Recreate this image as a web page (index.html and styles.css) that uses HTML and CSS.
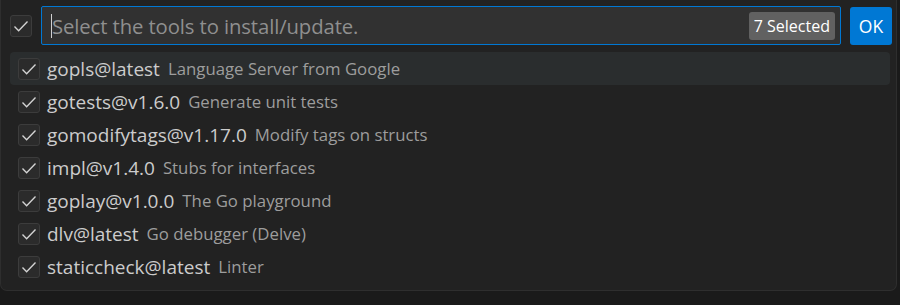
FILE: index.html
```html
<!DOCTYPE html>
<html>
<head>
<meta charset="utf-8">
<link rel="stylesheet" href="styles.css">
</head>
<body>
<div class="widget">
  <div class="header">
    <span class="cb cb-top"><svg viewBox="0 0 16 16"><path d="M2.8 8.4 L6.1 11.8 L13.2 4.4"/></svg></span>
    <div class="input">
      <span class="caret"></span>
      <span class="placeholder">Select the tools to install/update.</span>
      <span class="badge">7 Selected</span>
    </div>
    <button class="ok">OK</button>
  </div>
  <div class="list">
    <div class="row active"><span class="cb"><svg viewBox="0 0 16 16"><path d="M2.8 8.4 L6.1 11.8 L13.2 4.4"/></svg></span><span class="label">gopls@latest</span><span class="desc">Language Server from Google</span></div>
    <div class="row"><span class="cb"><svg viewBox="0 0 16 16"><path d="M2.8 8.4 L6.1 11.8 L13.2 4.4"/></svg></span><span class="label">gotests@v1.6.0</span><span class="desc">Generate unit tests</span></div>
    <div class="row"><span class="cb"><svg viewBox="0 0 16 16"><path d="M2.8 8.4 L6.1 11.8 L13.2 4.4"/></svg></span><span class="label">gomodifytags@v1.17.0</span><span class="desc">Modify tags on structs</span></div>
    <div class="row"><span class="cb"><svg viewBox="0 0 16 16"><path d="M2.8 8.4 L6.1 11.8 L13.2 4.4"/></svg></span><span class="label">impl@v1.4.0</span><span class="desc">Stubs for interfaces</span></div>
    <div class="row"><span class="cb"><svg viewBox="0 0 16 16"><path d="M2.8 8.4 L6.1 11.8 L13.2 4.4"/></svg></span><span class="label">goplay@v1.0.0</span><span class="desc">The Go playground</span></div>
    <div class="row"><span class="cb"><svg viewBox="0 0 16 16"><path d="M2.8 8.4 L6.1 11.8 L13.2 4.4"/></svg></span><span class="label">dlv@latest</span><span class="desc">Go debugger (Delve)</span></div>
    <div class="row"><span class="cb"><svg viewBox="0 0 16 16"><path d="M2.8 8.4 L6.1 11.8 L13.2 4.4"/></svg></span><span class="label">staticcheck@latest</span><span class="desc">Linter</span></div>
  </div>
</div>
</body>
</html>
```
FILE: styles.css
```css
html, body {
  margin: 0;
  padding: 0;
  background: #1a1a1a;
  height: 305px;
  overflow: hidden;
  font-family: "Open Sans", "Noto Sans", sans-serif;
}
.widget {
  width: 897px;
  background: #222222;
  border: 1px solid #2e2e2e;
  border-top: none;
  border-radius: 0 0 7px 7px;
  padding: 6px 0 6px 0;
  box-sizing: border-box;
  height: 291px;
}
.header {
  display: flex;
  align-items: center;
  padding-left: 9px;
  height: 39px;
}
.cb {
  width: 20px;
  height: 20px;
  border: 1px solid #3c3c3c;
  background: #2b2b2b;
  border-radius: 3px;
  display: flex;
  align-items: center;
  justify-content: center;
  flex: none;
}
.cb svg {
  width: 20px;
  height: 20px;
  fill: none;
  stroke: #d4d4d4;
  stroke-width: 1.1;
}
.cb-top {
  margin-right: 9px;
}
.input {
  width: 800px;
  height: 39px;
  box-sizing: border-box;
  border: 1px solid #0078d4;
  border-radius: 2px;
  background: #313131;
  display: flex;
  align-items: center;
  padding: 0 5px 0 9px;
  position: relative;
}
.caret {
  width: 1px;
  height: 24px;
  background: #d0d0d0;
}
.placeholder {
  color: #8f8f8f;
  font-size: 20.3px;
  flex: 1;
  letter-spacing: -0.1px;
}
.badge {
  background: #616161;
  color: #ffffff;
  font-size: 16px;
  border-radius: 3px;
  padding: 0 5px;
  height: 28px;
  line-height: 28px;
}
.ok {
  margin-left: 9px;
  width: 42px;
  height: 38px;
  border: none;
  border-radius: 3px;
  background: #0078d4;
  color: #ffffff;
  font-family: inherit;
  font-size: 17.5px;
  padding: 0;
}
.list {
  margin-top: 7px;
  padding: 0 6px 0 9px;
}
.row {
  height: 33px;
  display: flex;
  align-items: center;
  padding-left: 8px;
  border-radius: 4px;
}
.row.active {
  background: #2a2d2e;
}
.label {
  color: #cccccc;
  font-size: 19px;
  margin-left: 7px;
}
.desc {
  color: #9d9d9d;
  font-size: 16.8px;
  margin-left: 8px;
}
```
